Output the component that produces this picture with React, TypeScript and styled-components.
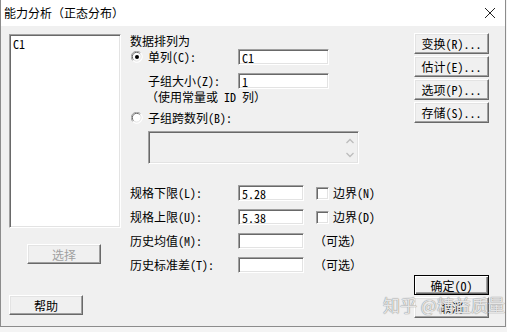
import React from 'react';
import styled, { createGlobalStyle, css } from 'styled-components';

const Global = createGlobalStyle`
  html, body { margin: 0; padding: 0; background: #f4f4f4; }
  body { width: 507px; height: 332px; overflow: hidden; }
  * { box-sizing: border-box; }
`;

const UI_FONT = `"Noto Sans Mono CJK SC", "Liberation Mono", "Noto Sans CJK SC", monospace`;

const sunken = css`
  border: 1px solid;
  border-color: #a0a0a0 #ffffff #ffffff #a0a0a0;
  box-shadow: inset 1px 1px #696969, inset -1px -1px #e3e3e3;
`;

const Window = styled.div`
  position: relative;
  width: 506px;
  height: 327px;
  border: 1px solid #8c8c8c;
  border-top: none;
  background: #f0f0f0;
  display: flex;
  flex-direction: column;
  font-family: ${UI_FONT};
  font-size: 12px;
  line-height: 14px;
  color: #000;
`;

const TitleBar = styled.div`
  height: 26px;
  flex: none;
  background: #ffffff;
  display: flex;
  align-items: center;
  justify-content: space-between;
  padding: 0 9px 0 3px;
  font-family: "Noto Sans CJK SC", sans-serif;
  font-size: 12px;
`;

const Body = styled.div`
  flex: 1;
  display: flex;
  padding: 8px 0 0 8px;
`;

const LeftCol = styled.div`
  width: 112px;
  display: flex;
  flex-direction: column;
`;

const ListBox = styled.div`
  ${sunken};
  height: 194px;
  background: #fff;
  padding: 2px 3px;
`;

const MidCol = styled.div`
  width: 230px;
  margin-left: 9px;
  display: flex;
  flex-direction: column;
`;

const RightCol = styled.div`
  width: 75px;
  margin-left: 54px;
  margin-top: -1px;
  display: flex;
  flex-direction: column;
  gap: 2px;
`;

const Heading = styled.div`
  height: 14px;
`;

const Row = styled.div<{ $mt: number; $indent?: number; $h?: number }>`
  display: flex;
  align-items: center;
  height: ${(p) => p.$h ?? 16}px;
  margin-top: ${(p) => p.$mt}px;
  padding-left: ${(p) => p.$indent ?? 0}px;
`;

const Label = styled.span<{ $w?: number }>`
  display: inline-block;
  width: ${(p) => (p.$w ? `${p.$w}px` : 'auto')};
  height: 14px;
  white-space: nowrap;
  flex: none;
`;

const RadioWrap = styled.span`
  width: 18px;
  padding-left: 1px;
  display: inline-flex;
  align-items: center;
  flex: none;
`;

const Field = styled.input<{ $w: number }>`
  ${sunken};
  width: ${(p) => p.$w}px;
  height: 16px;
  padding: 0 2px 0 3px;
  margin: 0;
  background: #fff;
  font-family: ${UI_FONT};
  font-size: 12px;
  line-height: 12px;
  color: #000;
  outline: none;
  flex: none;
`;

const Note = styled.div`
  height: 13px;
  margin-top: 1px;
  padding-left: 16px;
  white-space: nowrap;
`;

const MultiBox = styled.div`
  ${sunken};
  width: 211px;
  height: 33px;
  margin: 6px 0 0 18px;
  background: #f0f0f0;
  display: flex;
  justify-content: flex-end;
  align-items: center;
  padding-right: 3px;
`;

const Check = styled.span`
  ${sunken};
  width: 13px;
  height: 13px;
  background: #fff;
  margin: 0 4px 0 12px;
  flex: none;
`;

const Optional = styled.span`
  margin-left: 10px;
  white-space: nowrap;
`;

const Btn = styled.button<{ $w?: number; $default?: boolean; $disabled?: boolean }>`
  width: ${(p) => p.$w ?? 75}px;
  height: 21px;
  flex: none;
  margin: 0;
  padding: 0;
  background: #f0f0f0;
  font-family: ${UI_FONT};
  font-size: 12px;
  color: ${(p) => (p.$disabled ? '#a0a0a0' : '#000')};
  border: 1px solid;
  border-color: #ffffff #696969 #696969 #ffffff;
  box-shadow: inset -1px -1px #a0a0a0, inset 1px 1px #e3e3e3;
  white-space: nowrap;
  ${(p) =>
    p.$default &&
    css`
      border: 1px solid #000;
      box-shadow: inset 1px 1px #fff, inset -1px -1px #696969, inset -2px -2px #a0a0a0;
    `}
`;

const SelectBtn = styled(Btn)`
  margin: 16px 0 0 18px;
  height: 20px;
`;

const HelpBtn = styled(Btn)`
  margin-top: 31px;
  height: 20px;
`;

const OkBtn = styled(Btn)`
  margin-top: 150px;
  height: 20px;
`;

const Watermark = styled.div`
  position: absolute;
  left: 382px;
  top: 295px;
  font-family: "Noto Sans CJK SC", sans-serif;
  font-size: 17px;
  line-height: 20px;
  color: rgba(246, 246, 246, 0.85);
  white-space: nowrap;
  text-shadow: 0 0 1px #8e8e8e, 0 0 1px #8e8e8e;
  pointer-events: none;
`;

const Radio: React.FC<{ checked?: boolean }> = ({ checked }) => (
  <svg width="12" height="12" viewBox="0 0 12 12">
    <circle cx="6" cy="6" r="5.5" fill="#fff" />
    <path d="M1.8 9.6 A5 5 0 0 1 9.6 1.8" stroke="#a0a0a0" fill="none" />
    <path d="M2.6 8.8 A4 4 0 0 1 8.8 2.6" stroke="#696969" fill="none" />
    <path d="M9.6 1.8 A5 5 0 0 1 1.8 9.6" stroke="#ffffff" fill="none" />
    <path d="M8.8 2.6 A4 4 0 0 1 2.6 8.8" stroke="#e3e3e3" fill="none" />
    {checked && <circle cx="6" cy="6" r="2" fill="#000" />}
  </svg>
);

const Arrows = () => (
  <svg width="10" height="26" viewBox="0 0 10 26">
    <path d="M1.5 8 L5 4.5 L8.5 8" stroke="#bdbdbd" strokeWidth="1.3" fill="none" />
    <path d="M1.5 18 L5 21.5 L8.5 18" stroke="#bdbdbd" strokeWidth="1.3" fill="none" />
  </svg>
);

const CloseIcon = () => (
  <svg width="12" height="12" viewBox="0 0 12 12">
    <path d="M1 1 L11 11 M11 1 L1 11" stroke="#222" strokeWidth="1" />
  </svg>
);

const specRows = [
  { label: '规格下限(L):', value: '5.28', check: '边界(N)' },
  { label: '规格上限(U):', value: '5.38', check: '边界(D)' },
  { label: '历史均值(M):', value: '', opt: '（可选）' },
  { label: '历史标准差(T):', value: '', opt: '（可选）' },
];

export default function App() {
  return (
    <>
      <Global />
      <Window>
        <TitleBar>
          <span>能力分析（正态分布）</span>
          <CloseIcon />
        </TitleBar>
        <Body>
          <LeftCol>
            <ListBox>C1</ListBox>
            <SelectBtn $w={74} $disabled>选择</SelectBtn>
            <HelpBtn $w={74}>帮助</HelpBtn>
          </LeftCol>
          <MidCol>
            <Heading>数据排列为</Heading>
            <Row $mt={1}>
              <RadioWrap>
                <Radio checked />
              </RadioWrap>
              <Label $w={90}>单列(C):</Label>
              <Field $w={91} readOnly value="C1" />
            </Row>
            <Row $mt={8} $indent={18}>
              <Label $w={90}>子组大小(Z):</Label>
              <Field $w={91} readOnly value="1" />
            </Row>
            <Note>（使用常量或 ID 列）</Note>
            <Row $mt={8} $h={14}>
              <RadioWrap>
                <Radio />
              </RadioWrap>
              <Label>子组跨数列(B):</Label>
            </Row>
            <MultiBox>
              <Arrows />
            </MultiBox>
            {specRows.map((r, i) => (
              <Row key={r.label} $mt={i === 0 ? 21 : 8}>
                <Label $w={108}>{r.label}</Label>
                <Field $w={66} readOnly value={r.value} />
                {r.check && (
                  <>
                    <Check />
                    <Label>{r.check}</Label>
                  </>
                )}
                {r.opt && <Optional>{r.opt}</Optional>}
              </Row>
            ))}
          </MidCol>
          <RightCol>
            <Btn>变换(R)...</Btn>
            <Btn>估计(E)...</Btn>
            <Btn>选项(P)...</Btn>
            <Btn>存储(S)...</Btn>
            <OkBtn $default>确定(O)</OkBtn>
            <Btn>取消</Btn>
          </RightCol>
        </Body>
        <Watermark>知乎 @精益质量</Watermark>
      </Window>
    </>
  );
}
